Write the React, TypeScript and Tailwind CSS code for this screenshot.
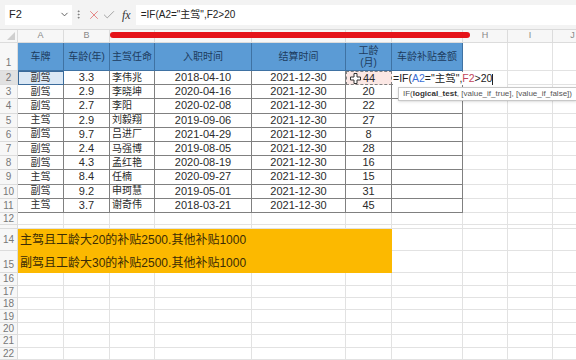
import React from 'react';
import { ChevronDown, EllipsisVertical, X, Check } from 'lucide-react';

const font = { fontFamily: '"Liberation Sans", "Noto Sans CJK SC", sans-serif' };

// column widths A..J
const W = ['w-[46px]', 'w-[46px]', 'w-[45px]', 'w-[97px]', 'w-[94px]', 'w-[46px]', 'w-[71px]', 'w-[45px]', 'w-[45px]', 'w-[40px]'];
const LETTERS = ['A', 'B', 'C', 'D', 'E', 'F', 'G', 'H', 'I', 'J'];

const rows = [
  ['副驾', '3.3', '李伟兆', '2018-04-10', '2021-12-30', '44'],
  ['副驾', '2.9', '李晓坤', '2020-04-16', '2021-12-30', '20'],
  ['副驾', '2.7', '李阳', '2020-02-08', '2021-12-30', '22'],
  ['主驾', '2.9', '刘毅翔', '2019-09-06', '2021-12-30', '27'],
  ['副驾', '9.7', '吕进厂', '2021-04-29', '2021-12-30', '8'],
  ['副驾', '2.4', '马强博', '2019-08-05', '2021-12-30', '28'],
  ['副驾', '4.3', '孟红艳', '2020-08-19', '2021-12-30', '16'],
  ['主驾', '8.4', '任楠', '2020-09-27', '2021-12-30', '15'],
  ['副驾', '9.2', '申珂慧', '2019-05-01', '2021-12-30', '31'],
  ['主驾', '3.7', '谢奇伟', '2018-03-21', '2021-12-30', '45'],
];

const headers = ['车牌', '车龄(年)', '主驾任命', '入职时间', '结算时间', '工龄\n(月)', '车龄补贴金额'];

function RowLabel({ n, h, active, align = 'items-center' }: { n: string; h: string; active?: boolean; align?: string }) {
  return (
    <div className={`${h} w-[18px] shrink-0 flex ${align} justify-center text-[10px] text-[#777] border-r border-b border-[#dcdcdc] ${active ? 'bg-[#e1e1e1]' : 'bg-[#f7f7f7]'}`}>
      {n}
    </div>
  );
}

function EmptyCells({ from, h }: { from: number; h: string }) {
  return (
    <>
      {W.slice(from).map((w, i) => (
        <div key={i} className={`${w} ${h} shrink-0 border-r border-b border-[#e2e2e2]`} />
      ))}
    </>
  );
}

function CrossCursor() {
  return (
    <svg width="11" height="11" viewBox="0 0 11 11" className="absolute left-[3px] top-[1px]">
      <path d="M4 0.5h3v3.5h3.5v3H7v3.5H4V7H0.5V4H4z" fill="#fff" stroke="#333" strokeWidth="1" />
    </svg>
  );
}

function DataRow({ r, idx }: { r: string[]; idx: number }) {
  const first = idx === 0;
  const h = 'h-[14.2px]';
  const cell = `${h} shrink-0 border-r border-b border-[#808080] flex items-center leading-none text-[#2b2b2b]`;
  return (
    <div className="flex">
      <RowLabel n={String(idx + 2)} h={h} active={first} />
      <div className={`${cell} ${W[0]} justify-center text-[10px] ${first ? 'bg-[#dbe8f5] outline outline-1 outline-[#3a6a9a] -outline-offset-1' : ''}`}>{r[0]}</div>
      <div className={`${cell} ${W[1]} justify-center text-[11px]`}>{r[1]}</div>
      <div className={`${cell} ${W[2]} pl-[2px] text-[10px]`}>{r[2]}</div>
      <div className={`${cell} ${W[3]} justify-center text-[11px]`}>{r[3]}</div>
      <div className={`${cell} ${W[4]} justify-center text-[11px]`}>{r[4]}</div>
      <div className={`${cell} ${W[5]} justify-center text-[11px] relative ${first ? 'bg-[#fbe7e4] border border-dashed border-[#6b6b6b]' : ''}`}>
        {first && <CrossCursor />}
        {r[5]}
      </div>
      <div className={`${cell} ${W[6]} relative`}>
        {first && (
          <>
            <span className="absolute left-[1px] top-[1px] z-10 whitespace-nowrap bg-white pr-[14px] text-[10.5px] leading-[12px] text-[#222]">
              =IF(<span className="text-[#3b6fd6]">A2</span>="主驾",<span className="text-[#c2455a]">F2</span>&gt;20<span className="inline-block w-px h-[11px] bg-[#222] align-middle" />
            </span>
            <div className="absolute left-[6px] top-[16px] z-20 whitespace-nowrap bg-white border border-[#c8c8c8] shadow-sm px-[4px] py-[1px] text-[8px] leading-[10px] text-[#555]">
              IF(<b className="text-[#333]">logical_test</b>, [value_if_true], [value_if_false])
            </div>
          </>
        )}
      </div>
      <EmptyCells from={7} h={h} />
    </div>
  );
}

export default function App() {
  return (
    <div className="w-[576px] h-[360px] overflow-hidden bg-white relative" style={font}>
      {/* formula bar */}
      <div className="h-[30px] bg-[#f3f3f3] flex items-center pl-[5px] border-b border-[#dadada]">
        <div className="w-[67px] h-[20px] bg-white flex items-center justify-between pl-[4px] pr-[2px] text-[11px] text-[#222]">
          F2
          <ChevronDown size={11} className="text-[#555]" />
        </div>
        <EllipsisVertical size={11} className="text-[#777] ml-[1px]" />
        <div className="flex items-center gap-[1px] pl-[3px]">
          <X size={14} className="text-[#e06666]" strokeWidth={1.3} />
          <Check size={14} className="text-[#8a8a8a]" strokeWidth={1.3} />
          <span className="text-[12px] italic text-[#333] pl-[5px] pr-[5px]" style={{ fontFamily: '"Liberation Serif", serif' }}>fx</span>
        </div>
        <div className="flex-1 h-[20px] bg-white flex items-center pl-[5px] text-[10px] text-[#222]">
          =IF(A2="主驾",F2&gt;20
        </div>
      </div>

      {/* column letters */}
      <div className="flex h-[13px] bg-[#f7f7f7]">
        <div className="w-[18px] shrink-0 border-r border-b border-[#dcdcdc] relative">
          <div className="absolute right-[2px] bottom-[2px] w-0 h-0 border-l-[8px] border-l-transparent border-b-[8px] border-b-[#cfcfcf]" />
        </div>
        {W.map((w, i) => (
          <div key={i} className={`${w} shrink-0 border-r border-b border-[#dcdcdc] flex items-center justify-center text-[9px] text-[#888]`}>
            {LETTERS[i]}
          </div>
        ))}
      </div>

      {/* header row */}
      <div className="flex">
        <RowLabel n="1" h="h-[28px]" align="items-end" />
        {headers.map((t, i) => (
          <div key={i} className={`${W[i]} h-[28px] shrink-0 bg-[#5b9bd5] border-r border-b border-[#3f72a3] flex items-center justify-center text-center whitespace-pre-line text-[10px] leading-[12px] text-[#1d3c5e]`}>
            {t}
          </div>
        ))}
        <EmptyCells from={7} h="h-[28px]" />
      </div>

      {rows.map((r, i) => (
        <DataRow key={i} r={r} idx={i} />
      ))}

      <div className="flex">
        <RowLabel n="12" h="h-[12.4px]" />
        <EmptyCells from={0} h="h-[12.4px]" />
      </div>
      <div className="flex">
        <div className="h-[4px] w-[18px] shrink-0 bg-[#f7f7f7] border-r border-b border-[#dcdcdc]" />
        <EmptyCells from={0} h="h-[4px]" />
      </div>

      {/* notes */}
      <div className="flex">
        <RowLabel n="14" h="h-[22px]" />
        <div className="w-[374px] h-[22px] shrink-0 bg-[#fcb900] flex items-center pl-[2px] text-[12px] text-[#3b2c06]">
          主驾且工龄大20的补贴2500.其他补贴1000
        </div>
        <EmptyCells from={6} h="h-[22px]" />
      </div>
      <div className="flex">
        <RowLabel n="15" h="h-[22px]" align="items-end" />
        <div className="w-[374px] h-[22px] shrink-0 bg-[#fcb900] flex items-end pb-[1px] pl-[2px] text-[12px] text-[#3b2c06]">
          副驾且工龄大30的补贴2500.其他补贴1000
        </div>
        <EmptyCells from={6} h="h-[22px]" />
      </div>

      {['16', '17', '18', '19', '20', '21', '22'].map((n) => (
        <div key={n} className="flex">
          <RowLabel n={n} h="h-[12.4px]" />
          <EmptyCells from={0} h="h-[12.4px]" />
        </div>
      ))}

      {/* red annotation stroke */}
      <div className="absolute left-[110px] top-[32px] w-[360px] h-[6px] rounded-full bg-[#e5141a]" />
    </div>
  );
}
